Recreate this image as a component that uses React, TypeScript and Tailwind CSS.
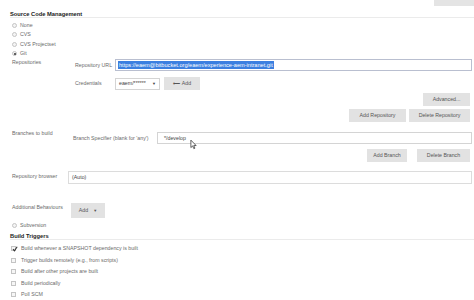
import { ReactNode } from "react";

const font = { fontFamily: '"Liberation Sans", Arial, sans-serif' };

function Radio({ checked = false }: { checked?: boolean }) {
  return (
    <span className="flex h-[5px] w-[5px] items-center justify-center rounded-full border border-[#c4c4c4] bg-[#f4f4f4]">
      {checked && <span className="h-[2px] w-[2px] rounded-full bg-[#333]" />}
    </span>
  );
}

function Checkbox({ checked = false }: { checked?: boolean }) {
  return (
    <span className="relative flex h-[5px] w-[5px] items-center justify-center border border-[#c4c4c4] bg-[#f6f6f6]">
      {checked && (
        <svg viewBox="0 0 6 6" className="absolute -top-[1px] left-0 h-[6px] w-[6px]">
          <path d="M1 3.2 L2.4 4.8 L5.2 0.8" fill="none" stroke="#333" strokeWidth="1.1" />
        </svg>
      )}
    </span>
  );
}

function Btn({ children, w, h = "h-[13px]" }: { children: ReactNode; w: string; h?: string }) {
  return (
    <div className={`${w} ${h} flex items-center justify-center bg-[#e2e2e2] text-[5.25px] text-[#555]`}>
      {children}
    </div>
  );
}

export default function App() {
  return (
    <div className="relative h-[300px] w-[474px] overflow-hidden bg-white text-[5.25px] leading-[7px] text-[#6a6a6a]" style={font}>
      {/* clipped button from the section above */}
      <div className="flex h-[7px] justify-end">
        <div className="h-[6px] w-[40px] bg-[#e4e4e4]" />
      </div>

      {/* Source Code Management */}
      <div className="ml-[10px] mt-[3px] h-[8px] border-b border-[#ebebeb] pt-[1px] text-[5.75px] font-bold leading-[6px] text-[#222]">
        Source Code Management
      </div>

      <div className="ml-[12px] mt-[3px] flex flex-col">
        {["None", "CVS", "CVS Projectset", "Git"].map((s, i) => (
          <div key={s} className="flex h-[9.3px] items-center gap-[3px]">
            <Radio checked={i === 3} />
            <span>{s}</span>
          </div>
        ))}
      </div>

      {/* Repositories */}
      <div className="ml-[12px] mt-[1px] flex">
        <div className="w-[63px]">Repositories</div>
        <div className="mr-[2px] flex flex-1 flex-col">
          <div className="flex h-[12px] items-center">
            <span className="w-[40px]">Repository URL</span>
            <div className="flex h-[12px] flex-1 items-center border border-[#b9bfd0] pl-[2px]">
              <span className="bg-[#3b7fe0] px-[1px] text-[5.6px] leading-[8px] text-white">
                https://eaem@bitbucket.org/eaem/experience-aem-intranet.git
              </span>
            </div>
          </div>
          <div className="mt-[6px] flex h-[13px] items-center">
            <span className="w-[40px]">Credentials</span>
            <div className="flex h-[12px] w-[45px] items-center justify-between border border-[#d4d4d4] px-[3px] text-[#444]">
              <span>eaem/******</span>
              <span className="text-[4px]">▼</span>
            </div>
            <div className="ml-[4px]">
              <Btn w="w-[36px]">
                <span className="mr-[2px]">⟵</span>Add
              </Btn>
            </div>
          </div>
          <div className="mr-[2px] mt-[3px] flex justify-end">
            <Btn w="w-[47px]">Advanced...</Btn>
          </div>
          <div className="mr-[2px] mt-[3px] flex justify-end gap-[3px]">
            <Btn w="w-[57px]">Add Repository</Btn>
            <Btn w="w-[61px]">Delete Repository</Btn>
          </div>
        </div>
      </div>

      {/* Branches */}
      <div className="ml-[12px] mt-[10px] flex">
        <div className="-mt-[2px] w-[61px]">Branches to build</div>
        <div className="mr-[2px] flex flex-1 flex-col">
          <div className="flex h-[12px] items-center">
            <span className="w-[84px]">Branch Specifier (blank for 'any')</span>
            <div className="flex h-[12px] flex-1 items-center border border-[#d4d4d4] pl-[6px] text-[#444]">
              */develop
            </div>
          </div>
          <div className="mr-[2px] mt-[5px] flex justify-end gap-[10px]">
            <Btn w="w-[40px]">Add Branch</Btn>
            <Btn w="w-[53px]">Delete Branch</Btn>
          </div>
        </div>
      </div>

      {/* Repository browser */}
      <div className="ml-[12px] mr-[2px] mt-[9px] flex h-[13px] items-center">
        <span className="-mt-[3px] w-[56px]">Repository browser</span>
        <div className="flex h-[13px] flex-1 items-center border border-[#dcdcdc] pl-[3px] text-[#444]">
          (Auto)
        </div>
      </div>

      {/* Additional Behaviours */}
      <div className="ml-[12px] mt-[19px] flex items-start">
        <span className="w-[59px] pt-[1px]">Additional Behaviours</span>
        <div className="flex h-[15px] w-[34px] items-center justify-center gap-[5px] bg-[#e2e2e2] text-[#555]">
          <span>Add</span>
          <span className="text-[4px]">▼</span>
        </div>
      </div>

      <div className="ml-[12px] mt-[3px] flex h-[8px] items-center gap-[3px]">
        <Radio />
        <span>Subversion</span>
      </div>

      {/* Build Triggers */}
      <div className="ml-[10px] mt-[3px] h-[8px] border-b border-[#ebebeb] pt-[1px] text-[5.75px] font-bold leading-[6px] text-[#222]">
        Build Triggers
      </div>

      <div className="ml-[11px] mt-[3px] flex flex-col">
        {[
          "Build whenever a SNAPSHOT dependency is built",
          "Trigger builds remotely (e.g., from scripts)",
          "Build after other projects are built",
          "Build periodically",
          "Poll SCM",
        ].map((s, i) => (
          <div key={s} className="flex h-[11.5px] items-center gap-[5px]">
            <Checkbox checked={i === 0} />
            <span>{s}</span>
          </div>
        ))}
      </div>

      {/* mouse pointer over the branch field */}
      <svg viewBox="0 0 8 12" className="absolute left-[190px] top-[139px] h-[11px] w-[7px]">
        <path d="M1 1 L1 9.5 L3 7.6 L4.4 10.8 L5.6 10.2 L4.3 7.2 L7 7.2 Z" fill="#fff" stroke="#222" strokeWidth="0.8" />
      </svg>
    </div>
  );
}
